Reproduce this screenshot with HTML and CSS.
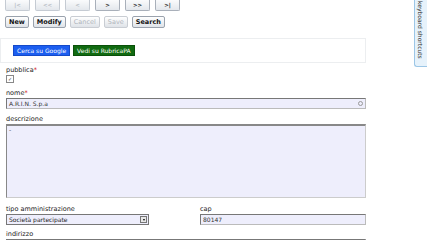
FILE: index.html
```html
<!DOCTYPE html>
<html>
<head>
<meta charset="utf-8">
<link rel="stylesheet" href="styles.css">
</head>
<body>
<div class="page">
  <div class="nav">
    <button class="nb dis">|&lt;</button>
    <button class="nb dis">&lt;&lt;</button>
    <button class="nb dis">&lt;</button>
    <button class="nb">&gt;</button>
    <button class="nb">&gt;&gt;</button>
    <button class="nb">&gt;|</button>
  </div>
  <div class="actions">
    <button class="ab">New</button>
    <button class="ab">Modify</button>
    <button class="ab dis">Cancel</button>
    <button class="ab dis">Save</button>
    <button class="ab">Search</button>
  </div>
  <div class="links">
    <span class="lb blue">Cerca su Google</span>
    <span class="lb green">Vedi su RubricaPA</span>
  </div>
  <div class="field first">
    <div class="lbl">pubblica<span class="req">*</span></div>
    <span class="chk">&#10003;</span>
  </div>
  <div class="field">
    <div class="lbl">nome<span class="req">*</span></div>
    <div class="inp wide">A.R.I.N. S.p.a<span class="circ"></span></div>
  </div>
  <div class="field">
    <div class="lbl">descrizione</div>
    <div class="ta">-</div>
  </div>
  <div class="row2">
    <div class="col">
      <div class="lbl">tipo amministrazione</div>
      <div class="sel">Società partecipate<span class="arr"></span></div>
    </div>
    <div class="col">
      <div class="lbl">cap</div>
      <div class="inp cap">80147</div>
    </div>
  </div>
  <div class="field last">
    <div class="lbl">indirizzo</div>
    <div class="inp wide"></div>
  </div>
</div>
<div class="kbd"><span>keyboard shortcuts</span></div>
</body>
</html>
```
FILE: styles.css
```css
html, body { margin: 0; padding: 0; background: #fff; }
body { font-family: "DejaVu Sans", Verdana, sans-serif; font-size: 6.5px; color: #222; overflow: hidden; height: 240px; width: 427px; position: relative; }
.page { padding: 0 0 0 6px; }
.nav { display: flex; gap: 5px; height: 11px; margin-left: -1px; }
.nb { width: 25px; height: 11px; padding: 0; margin: 0; border: 1px solid #a9b0ba; border-top: none; border-radius: 0 0 2px 2px; background: linear-gradient(#fafbfc, #e3e7ec); font: bold 5.5px "DejaVu Sans", sans-serif; color: #222; line-height: 9px; }
.nb.dis { color: #b7bcc4; border-color: #c5cbd3; }
.actions { display: flex; gap: 4px; margin-top: 5px; height: 12px; margin-left: -1px; }
.ab { height: 12px; padding: 0 3px; margin: 0; border: 1px solid #9aa2ad; border-radius: 2px; background: linear-gradient(#ffffff, #dfe3e8); font: bold 6.5px "DejaVu Sans", sans-serif; color: #111; line-height: 10px; }
.ab.dis { color: #b0b5bc; border-color: #c9cdd3; font-weight: normal; }
.links { margin: 10px 0 0 -6px; width: 366px; height: 25px; border: 1px solid #eceef0; box-sizing: border-box; display: flex; align-items: center; gap: 3px; padding-left: 12px; }
.lb { height: 11px; line-height: 9px; padding: 0 3px; color: #fff; font-size: 6px; box-sizing: border-box; }
.lb.blue { background: #1c5ef0; border: 1px solid #1449c8; }
.lb.green { background: #106a10; border: 1px solid #0a500a; }
.field { margin-top: 7px; }
.field.first { margin-top: 4px; }
.lbl { height: 8px; line-height: 7px; color: #222; }
.req { color: #c00; }
.chk { display: block; width: 6px; height: 6px; border: 1px solid #888; font-size: 5px; line-height: 6px; text-align: center; color: #444; background: #fff; }
.inp { height: 11px; box-sizing: border-box; background: #eeeefc; border: 1px solid #777; border-right-color: #bbb; border-bottom-color: #bbb; padding-left: 2px; line-height: 9px; font-size: 6px; color: #333; position: relative; }
.wide { width: 360px; }
.circ { position: absolute; right: 2px; top: 1.5px; width: 5px; height: 5px; border: 1px solid #999; border-radius: 50%; box-sizing: border-box; }
.ta { width: 360px; height: 74px; box-sizing: border-box; background: #eeeefc; border: 1px solid #888; border-top: 2px solid #888; border-right-color: #ccc; border-bottom-color: #ccc; font-size: 6px; padding-left: 2px; line-height: 8px; color: #444; }
.row2 { display: flex; margin-top: 8px; }
.col:first-child { width: 194px; }
.sel { width: 143px; height: 11px; box-sizing: border-box; background: #eeeefc; border: 1px solid #777; font-size: 6px; line-height: 9px; padding-left: 2px; position: relative; color: #222; }
.arr { position: absolute; right: 1px; top: 1px; width: 7px; height: 7px; background: #e8e8e8; border: 1px solid #777; box-sizing: border-box; }
.arr::after { content: ""; position: absolute; left: 1.5px; top: 2px; border-left: 1.5px solid transparent; border-right: 1.5px solid transparent; border-top: 2px solid #000; }
.cap { width: 166px; }
.field.last { margin-top: 6px; }
.kbd { position: absolute; right: 0; top: 0; width: 12px; height: 66px; background: #e6f2fb; border: 1px solid #9cc6e6; border-right: none; border-top: none; border-radius: 0 0 0 3px; overflow: hidden; }
.kbd span { position: absolute; left: 2px; top: 1px; writing-mode: vertical-rl; font-size: 6px; color: #333; white-space: nowrap; }
```
